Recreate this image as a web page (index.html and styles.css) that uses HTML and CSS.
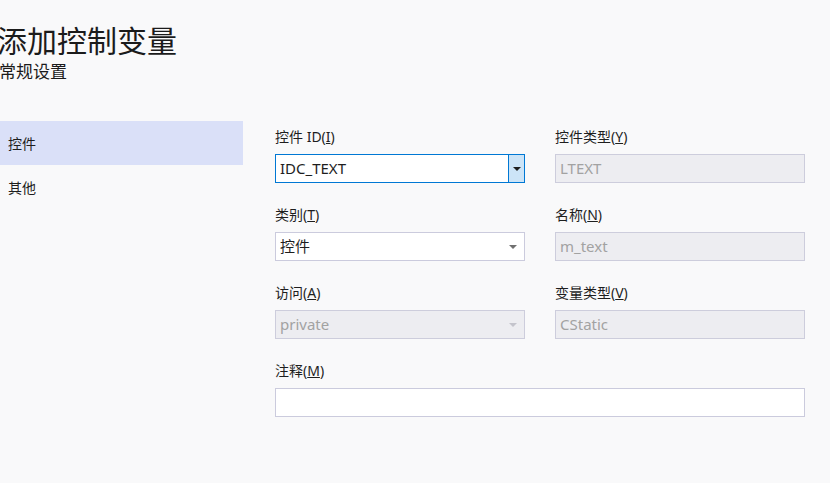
FILE: index.html
```html
<!DOCTYPE html>
<html lang="zh-CN">
<head>
<meta charset="utf-8">
<title>添加控制变量</title>
<link rel="stylesheet" href="styles.css">
</head>
<body>
<div class="page">
  <header class="header">
    <h1 class="title">添加控制变量</h1>
    <div class="subtitle">常规设置</div>
  </header>
  <div class="main">
    <nav class="sidebar">
      <div class="nav-item active">控件</div>
      <div class="nav-item">其他</div>
    </nav>
    <form class="form">
      <div class="field">
        <label class="label">控件 ID(<u>I</u>)</label>
        <div class="combo focused">
          <span class="value">IDC_TEXT</span>
          <span class="drop-btn"><span class="arrow"></span></span>
        </div>
      </div>
      <div class="field">
        <label class="label">控件类型(<u>Y</u>)</label>
        <div class="input disabled"><span class="value">LTEXT</span></div>
      </div>
      <div class="field">
        <label class="label">类别(<u>T</u>)</label>
        <div class="combo">
          <span class="value">控件</span>
          <span class="drop-plain"><span class="arrow grey"></span></span>
        </div>
      </div>
      <div class="field">
        <label class="label">名称(<u>N</u>)</label>
        <div class="input disabled"><span class="value">m_text</span></div>
      </div>
      <div class="field">
        <label class="label">访问(<u>A</u>)</label>
        <div class="combo disabled">
          <span class="value">private</span>
          <span class="drop-plain"><span class="arrow light"></span></span>
        </div>
      </div>
      <div class="field">
        <label class="label">变量类型(<u>V</u>)</label>
        <div class="input disabled"><span class="value">CStatic</span></div>
      </div>
      <div class="field wide">
        <label class="label">注释(<u>M</u>)</label>
        <div class="input"></div>
      </div>
    </form>
  </div>
</div>
</body>
</html>
```

FILE: styles.css
```css
* { box-sizing: border-box; }
html, body {
  margin: 0;
  padding: 0;
  background: #f9f9fa;
}
body {
  font-family: "Noto Sans", "Noto Sans CJK SC", sans-serif;
  color: #1e1e1e;
  width: 830px;
  height: 483px;
  overflow: hidden;
}
.header {
  padding-top: 22px;
  margin-left: -3px;
}
.title {
  margin: 0;
  font-size: 30px;
  font-weight: normal;
  line-height: 34px;
  font-family: "Noto Sans CJK SC", sans-serif;
  color: #1b1b1b;
}
.subtitle {
  font-size: 17px;
  line-height: 22px;
  margin-top: 4px;
  margin-left: 2px;
  font-family: "Noto Sans CJK SC", sans-serif;
  color: #1b1b1b;
}
.main {
  display: flex;
  margin-top: 39px;
}
.sidebar {
  width: 243px;
  flex: none;
}
.nav-item {
  height: 44px;
  line-height: 44px;
  padding-left: 8px;
  font-size: 14px;
  font-family: "Noto Sans CJK SC", sans-serif;
}
.nav-item.active {
  background: #dae0f8;
}
.form {
  display: grid;
  grid-template-columns: 250px 250px;
  column-gap: 30px;
  row-gap: 22px;
  padding-left: 32px;
  padding-top: 6px;
}
.field {
  display: flex;
  flex-direction: column;
  gap: 7px;
}
.field.wide {
  grid-column: 1 / 3;
}
.label {
  font-size: 14px;
  line-height: 20px;
  height: 20px;
}
.label u {
  text-underline-offset: 1px;
}
.input, .combo {
  height: 29px;
  border: 1px solid #cbcbdd;
  background: #ffffff;
  display: flex;
  align-items: center;
  font-size: 15px;
}
.value {
  flex: 1;
  padding-left: 4px;
  line-height: 27px;
}
.disabled {
  background: #ededf1;
  border-color: #cdcddc;
  color: #a2a2a2;
}
.combo.focused {
  border-color: #0078d4;
}
.drop-btn {
  width: 16px;
  align-self: stretch;
  background: #cce4f7;
  border-left: 1px solid #0078d4;
  display: flex;
  align-items: center;
  justify-content: center;
}
.drop-plain {
  width: 18px;
  align-self: stretch;
  display: flex;
  align-items: center;
  justify-content: center;
  padding-right: 4px;
}
.arrow {
  width: 0;
  height: 0;
  border-left: 4px solid transparent;
  border-right: 4px solid transparent;
  border-top: 4px solid #1e1e1e;
}
.arrow.grey { border-top-color: #707070; }
.arrow.light { border-top-color: #c4c4cc; }
```
